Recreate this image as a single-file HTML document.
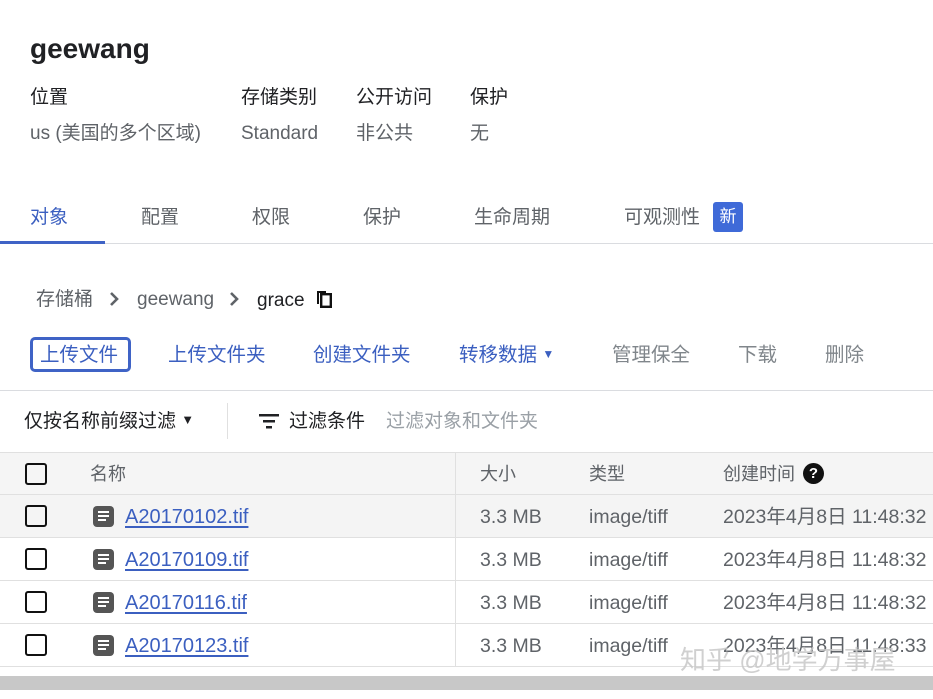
<!DOCTYPE html>
<html><head><meta charset="utf-8"><style>
*{margin:0;padding:0;box-sizing:border-box}
body{width:933px;height:699px;background:#fff;position:relative;overflow:hidden;font-family:"Liberation Sans","Noto Sans CJK SC",sans-serif;color:#3c4043;line-height:24px}
.a{position:absolute;white-space:nowrap}
.g{color:#5f6368}
.b{color:#3b5fc0}
.cb{position:absolute;width:22px;height:22px;border:2.5px solid #111;border-radius:3px;left:25px}
.fi{position:absolute;left:93px;width:21px;height:21px;background:#555;border-radius:4px}
.fi i{position:absolute;left:5px;height:2px;background:#fff}
.lk{color:#3b5fc0;text-decoration:underline;text-underline-offset:3px;font-size:20px;left:125px}
.row{position:absolute;left:0;width:933px;height:43px;border-bottom:1px solid #e0e0e0}
.c{font-size:18px;color:#5f6368}
.d{font-size:19.5px}
</style></head><body>
<div class="a" style="left:30px;top:34px;font-size:28px;font-weight:bold;color:#202124;line-height:30px">geewang</div>
<div class="a" style="left:30px;top:86px;font-size:19px;color:#202124">位置</div>
<div class="a" style="left:241px;top:86px;font-size:19px;color:#202124">存储类别</div>
<div class="a" style="left:356px;top:86px;font-size:19px;color:#202124">公开访问</div>
<div class="a" style="left:470px;top:86px;font-size:19px;color:#202124">保护</div>
<div class="a g" style="left:30px;top:122px;font-size:19px">us (美国的多个区域)</div>
<div class="a g" style="left:241px;top:122px;font-size:19px">Standard</div>
<div class="a g" style="left:356px;top:122px;font-size:19px">非公共</div>
<div class="a g" style="left:470px;top:122px;font-size:19px">无</div>

<div class="a b" style="left:30px;top:206px;font-size:19px">对象</div>
<div class="a g" style="left:141px;top:206px;font-size:19px">配置</div>
<div class="a g" style="left:252px;top:206px;font-size:19px">权限</div>
<div class="a g" style="left:363px;top:206px;font-size:19px">保护</div>
<div class="a g" style="left:474px;top:206px;font-size:19px">生命周期</div>
<div class="a g" style="left:624px;top:206px;font-size:19px">可观测性</div>
<div class="a" style="left:713px;top:202px;width:30px;height:30px;background:#3f6ad8;color:#fff;border-radius:3px;font-size:17px;text-align:center;line-height:30px">新</div>
<div class="a" style="left:0;top:243px;width:933px;height:1px;background:#dadce0"></div>
<div class="a" style="left:0;top:241px;width:105px;height:3px;background:#3f63c6"></div>

<div class="a g" style="left:36px;top:288px;font-size:19px">存储桶</div>
<svg class="a" style="left:108px;top:291px" width="12" height="16"><path d="M3 2l6 6-6 6" fill="none" stroke="#5f6368" stroke-width="2.6"/></svg>
<div class="a g" style="left:137px;top:288px;font-size:19px">geewang</div>
<svg class="a" style="left:228px;top:291px" width="12" height="16"><path d="M3 2l6 6-6 6" fill="none" stroke="#5f6368" stroke-width="2.6"/></svg>
<div class="a" style="left:257px;top:289px;font-size:19px;color:#202124">grace</div>
<svg class="a" style="left:314px;top:289px" width="20" height="20" viewBox="0 0 20 20"><path d="M3 2h9v2H5v11H3z" fill="#111"/><rect x="7.2" y="5.2" width="9.6" height="12.6" fill="none" stroke="#111" stroke-width="2.4"/></svg>

<div class="a" style="left:30px;top:337px;width:101px;height:35px;border:3px solid #3f63c6;border-radius:5px"></div>
<div class="a b" style="left:40px;top:343px;font-size:19.5px">上传文件</div>
<div class="a b" style="left:168px;top:343px;font-size:19.5px">上传文件夹</div>
<div class="a b" style="left:313px;top:343px;font-size:19.5px">创建文件夹</div>
<div class="a b" style="left:459px;top:343px;font-size:19.5px">转移数据 <span style="font-size:12px;position:relative;top:-3px">▼</span></div>
<div class="a" style="left:612px;top:343px;font-size:19.5px;color:#80868b">管理保全</div>
<div class="a" style="left:738px;top:343px;font-size:19.5px;color:#80868b">下载</div>
<div class="a" style="left:825px;top:343px;font-size:19.5px;color:#80868b">删除</div>
<div class="a" style="left:0;top:390px;width:933px;height:1px;background:#dadce0"></div>

<div class="a" style="left:24px;top:410px;font-size:19px;color:#202124">仅按名称前缀过滤 <span style="font-size:13px;position:relative;top:-3px">▼</span></div>
<div class="a" style="left:227px;top:403px;width:1px;height:36px;background:#e0e0e0"></div>
<svg class="a" style="left:259px;top:413px" width="20" height="16"><rect x="0" y="1" width="20" height="2.5" fill="#202124"/><rect x="4" y="7" width="12" height="2.5" fill="#202124"/><rect x="7" y="13" width="6" height="2.5" fill="#202124"/></svg>
<div class="a" style="left:289px;top:410px;font-size:19px;color:#202124">过滤条件</div>
<div class="a" style="left:386px;top:410px;font-size:19px;color:#9aa0a6">过滤对象和文件夹</div>

<div class="row" style="top:452px;background:#f5f5f5;border-top:1px solid #e0e0e0"></div>
<div class="row" style="top:495px;background:#f4f4f4"></div>
<div class="row" style="top:538px"></div>
<div class="row" style="top:581px"></div>
<div class="row" style="top:624px"></div>
<div class="a" style="left:455px;top:452px;width:1px;height:215px;background:#e0e0e0"></div>

<div class="cb" style="top:463px"></div>
<div class="a c" style="left:90px;top:462px">名称</div>
<div class="a c" style="left:480px;top:462px">大小</div>
<div class="a c" style="left:589px;top:462px">类型</div>
<div class="a c" style="left:723px;top:462px">创建时间</div>
<div class="a" style="left:803px;top:463px;width:21px;height:21px;border-radius:50%;background:#111;color:#fff;font-size:15px;font-weight:bold;text-align:center;line-height:21px">?</div>

<div class="cb" style="top:505px"></div><div class="fi" style="top:506px"><i style="top:5px;width:11px"></i><i style="top:9px;width:11px"></i><i style="top:13px;width:8px"></i></div>
<div class="a lk" style="top:505px">A20170102.tif</div>
<div class="a c d" style="left:480px;top:505px">3.3 MB</div><div class="a c d" style="left:589px;top:505px">image/tiff</div><div class="a c d" style="left:723px;top:505px">2023年4月8日 11:48:32</div>

<div class="cb" style="top:548px"></div><div class="fi" style="top:549px"><i style="top:5px;width:11px"></i><i style="top:9px;width:11px"></i><i style="top:13px;width:8px"></i></div>
<div class="a lk" style="top:548px">A20170109.tif</div>
<div class="a c d" style="left:480px;top:548px">3.3 MB</div><div class="a c d" style="left:589px;top:548px">image/tiff</div><div class="a c d" style="left:723px;top:548px">2023年4月8日 11:48:32</div>

<div class="cb" style="top:591px"></div><div class="fi" style="top:592px"><i style="top:5px;width:11px"></i><i style="top:9px;width:11px"></i><i style="top:13px;width:8px"></i></div>
<div class="a lk" style="top:591px">A20170116.tif</div>
<div class="a c d" style="left:480px;top:591px">3.3 MB</div><div class="a c d" style="left:589px;top:591px">image/tiff</div><div class="a c d" style="left:723px;top:591px">2023年4月8日 11:48:32</div>

<div class="cb" style="top:634px"></div><div class="fi" style="top:635px"><i style="top:5px;width:11px"></i><i style="top:9px;width:11px"></i><i style="top:13px;width:8px"></i></div>
<div class="a lk" style="top:634px">A20170123.tif</div>
<div class="a c d" style="left:480px;top:634px">3.3 MB</div><div class="a c d" style="left:589px;top:634px">image/tiff</div><div class="a c d" style="left:723px;top:634px">2023年4月8日 11:48:33</div>
<div class="a" style="left:680px;top:645px;font-size:26px;line-height:30px;color:rgba(200,200,200,0.85)">知乎 @地学万事屋</div>

<div class="a" style="left:0;top:676px;width:933px;height:14px;background:#c8c8c8"></div>
</body></html>
